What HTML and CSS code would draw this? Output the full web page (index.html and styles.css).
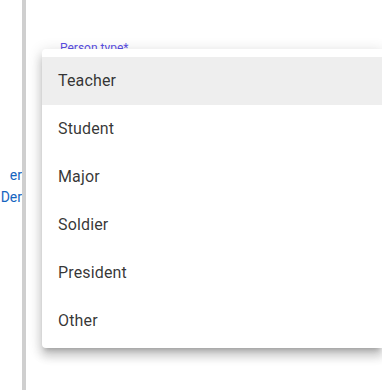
FILE: index.html
```html
<!DOCTYPE html>
<html>
<head>
<meta charset="utf-8">
<link rel="stylesheet" href="styles.css">
</head>
<body>
<div class="page">
  <div class="side">
    <div class="side-text">
      <div class="side-line">er</div>
      <div class="side-line">Der</div>
    </div>
  </div>
  <div class="divider"></div>
  <div class="main">
    <div class="field-label">Person type*</div>
  </div>
</div>
<ul class="menu">
  <li class="menu-item selected">Teacher</li>
  <li class="menu-item">Student</li>
  <li class="menu-item">Major</li>
  <li class="menu-item">Soldier</li>
  <li class="menu-item">President</li>
  <li class="menu-item">Other</li>
</ul>
</body>
</html>
```
FILE: styles.css
```css
html, body {
  margin: 0;
  padding: 0;
  background: #fff;
  font-family: Roboto, "Liberation Sans", sans-serif;
}
.page {
  display: flex;
  height: 390px;
  overflow: hidden;
}
.side {
  width: 22px;
  flex: none;
}
.side-text {
  padding-top: 164px;
  text-align: right;
  color: #1565c0;
  font-size: 14px;
  line-height: 22px;
}
.side-line {
  white-space: nowrap;
}
.divider {
  width: 4px;
  background: #cfcfcf;
  flex: none;
}
.main {
  flex: 1;
  padding-left: 34px;
  padding-top: 41px;
}
.field-label {
  font-size: 12px;
  line-height: 14px;
  color: #5b4fe3;
}
.menu {
  position: absolute;
  left: 42px;
  top: 49px;
  width: 340px;
  height: 299px;
  margin: 0;
  padding: 8px 0 0;
  box-sizing: border-box;
  list-style: none;
  background: #fff;
  border-radius: 4px 0 0 4px;
  overflow: hidden;
  box-shadow: 0 5px 5px -3px rgba(0,0,0,0.2), 0 8px 10px 1px rgba(0,0,0,0.14), 0 3px 14px 2px rgba(0,0,0,0.12);
}
.menu-item {
  height: 48px;
  line-height: 48px;
  padding-left: 16px;
  font-size: 16px;
  color: rgba(0,0,0,0.8);
  letter-spacing: 0.15px;
}
.menu-item.selected {
  background: #eeeeee;
}
```
